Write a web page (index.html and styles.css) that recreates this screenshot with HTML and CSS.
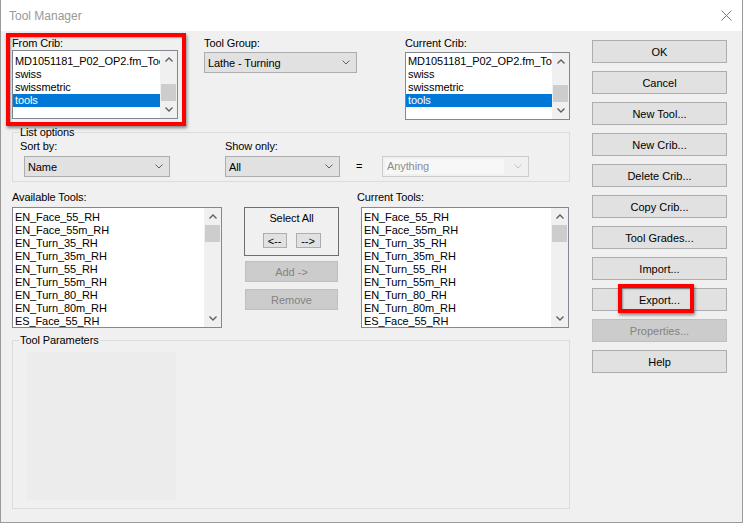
FILE: index.html
```html
<!DOCTYPE html>
<html lang="en">
<head>
    <meta charset="UTF-8">
    <meta name="viewport" content="width=device-width, initial-scale=1.0">
    <title>Tool Manager</title>
    <link rel="stylesheet" href="styles.css">
</head>
<body>
<div class="window">
    <div class="titlebar">
        <span class="title">Tool Manager</span>
        <svg class="close" width="11" height="11" viewBox="0 0 11 11"><path d="M0.5 0.5L10.5 10.5M10.5 0.5L0.5 10.5" stroke="#7a7a7a" stroke-width="1" fill="none"/></svg>
    </div>

    <div class="content">
        <div class="main">
            <!-- cribs -->
            <div class="crib-row">
                <div class="from-crib">
                    <div class="label">From Crib:</div>
                    <div class="listbox crib-list">
                        <div class="items">
                            <div class="item">MD1051181_P02_OP2.fm_Tools</div>
                            <div class="item">swiss</div>
                            <div class="item">swissmetric</div>
                            <div class="item selected">tools</div>
                        </div>
                        <div class="scrollbar at-end">
                            <span class="arrow"><svg width="8" height="5" viewBox="0 0 8 5"><path d="M0.5 4.5L4 1L7.5 4.5" stroke="#606060" stroke-width="1.4" fill="none"/></svg></span>
                            <span class="track"><span class="thumb"></span></span>
                            <span class="arrow"><svg width="8" height="5" viewBox="0 0 8 5"><path d="M0.5 0.5L4 4L7.5 0.5" stroke="#606060" stroke-width="1.4" fill="none"/></svg></span>
                        </div>
                    </div>
                </div>
                <div>
                    <div class="label">Tool Group:</div>
                    <div class="combo group-combo">
                        <span>Lathe - Turning</span>
                        <svg width="8" height="5" viewBox="0 0 8 5"><path d="M0.5 0.5L4 4L7.5 0.5" stroke="#606060" stroke-width="1" fill="none"/></svg>
                    </div>
                </div>
                <div>
                    <div class="label">Current Crib:</div>
                    <div class="listbox crib-list current">
                        <div class="items">
                            <div class="item">MD1051181_P02_OP2.fm_Tools</div>
                            <div class="item">swiss</div>
                            <div class="item">swissmetric</div>
                            <div class="item selected">tools</div>
                        </div>
                        <div class="scrollbar at-end">
                            <span class="arrow"><svg width="8" height="5" viewBox="0 0 8 5"><path d="M0.5 4.5L4 1L7.5 4.5" stroke="#606060" stroke-width="1.4" fill="none"/></svg></span>
                            <span class="track"><span class="thumb"></span></span>
                            <span class="arrow"><svg width="8" height="5" viewBox="0 0 8 5"><path d="M0.5 0.5L4 4L7.5 0.5" stroke="#606060" stroke-width="1.4" fill="none"/></svg></span>
                        </div>
                    </div>
                </div>
            </div>

            <!-- list options -->
            <fieldset class="group list-options">
                <legend>List options</legend>
                <div class="options">
                    <div class="opt-sort">
                        <div class="label">Sort by:</div>
                        <div class="combo">
                            <span>Name</span>
                            <svg width="8" height="5" viewBox="0 0 8 5"><path d="M0.5 0.5L4 4L7.5 0.5" stroke="#606060" stroke-width="1" fill="none"/></svg>
                        </div>
                    </div>
                    <div class="opt-show">
                        <div class="label">Show only:</div>
                        <div class="combo">
                            <span>All</span>
                            <svg width="8" height="5" viewBox="0 0 8 5"><path d="M0.5 0.5L4 4L7.5 0.5" stroke="#606060" stroke-width="1" fill="none"/></svg>
                        </div>
                    </div>
                    <span class="eq">=</span>
                    <div class="combo disabled">
                        <span class="edit">Anything</span>
                        <svg width="8" height="5" viewBox="0 0 8 5"><path d="M0.5 0.5L4 4L7.5 0.5" stroke="#c4c4c4" stroke-width="1" fill="none"/></svg>
                    </div>
                </div>
            </fieldset>

            <!-- tools -->
            <div class="tools-row">
                <div>
                    <div class="label">Available Tools:</div>
                    <div class="listbox tool-list">
                        <div class="items">
                            <div class="item">EN_Face_55_RH</div>
                            <div class="item">EN_Face_55m_RH</div>
                            <div class="item">EN_Turn_35_RH</div>
                            <div class="item">EN_Turn_35m_RH</div>
                            <div class="item">EN_Turn_55_RH</div>
                            <div class="item">EN_Turn_55m_RH</div>
                            <div class="item">EN_Turn_80_RH</div>
                            <div class="item">EN_Turn_80m_RH</div>
                            <div class="item">ES_Face_55_RH</div>
                        </div>
                        <div class="scrollbar">
                            <span class="arrow"><svg width="8" height="5" viewBox="0 0 8 5"><path d="M0.5 4.5L4 1L7.5 4.5" stroke="#606060" stroke-width="1.4" fill="none"/></svg></span>
                            <span class="track"><span class="thumb"></span></span>
                            <span class="arrow"><svg width="8" height="5" viewBox="0 0 8 5"><path d="M0.5 0.5L4 4L7.5 0.5" stroke="#606060" stroke-width="1.4" fill="none"/></svg></span>
                        </div>
                    </div>
                </div>
                <div class="mover">
                    <div class="select-box">
                        <div class="select-label">Select All</div>
                        <div class="arrows">
                            <button class="small-btn left">&lt;--</button>
                            <button class="small-btn right">--&gt;</button>
                        </div>
                    </div>
                    <button class="btn move-btn" disabled>Add -&gt;</button>
                    <button class="btn move-btn" disabled>Remove</button>
                </div>
                <div>
                    <div class="label">Current Tools:</div>
                    <div class="listbox tool-list current">
                        <div class="items">
                            <div class="item">EN_Face_55_RH</div>
                            <div class="item">EN_Face_55m_RH</div>
                            <div class="item">EN_Turn_35_RH</div>
                            <div class="item">EN_Turn_35m_RH</div>
                            <div class="item">EN_Turn_55_RH</div>
                            <div class="item">EN_Turn_55m_RH</div>
                            <div class="item">EN_Turn_80_RH</div>
                            <div class="item">EN_Turn_80m_RH</div>
                            <div class="item">ES_Face_55_RH</div>
                        </div>
                        <div class="scrollbar">
                            <span class="arrow"><svg width="8" height="5" viewBox="0 0 8 5"><path d="M0.5 4.5L4 1L7.5 4.5" stroke="#606060" stroke-width="1.4" fill="none"/></svg></span>
                            <span class="track"><span class="thumb"></span></span>
                            <span class="arrow"><svg width="8" height="5" viewBox="0 0 8 5"><path d="M0.5 0.5L4 4L7.5 0.5" stroke="#606060" stroke-width="1.4" fill="none"/></svg></span>
                        </div>
                    </div>
                </div>
            </div>

            <!-- parameters -->
            <fieldset class="group params">
                <legend>Tool Parameters</legend>
                <div class="preview"></div>
            </fieldset>
        </div>

        <div class="side">
            <button class="btn">OK</button>
            <button class="btn">Cancel</button>
            <button class="btn">New Tool...</button>
            <button class="btn">New Crib...</button>
            <button class="btn">Delete Crib...</button>
            <button class="btn">Copy Crib...</button>
            <button class="btn">Tool Grades...</button>
            <button class="btn">Import...</button>
            <button class="btn marked">Export...</button>
            <button class="btn" disabled>Properties...</button>
            <button class="btn">Help</button>
        </div>
    </div>
</div>
</body>
</html>
```

FILE: styles.css
```css
body { margin: 0; font: 11px "Liberation Sans", Arial, sans-serif; letter-spacing: -0.1px; color: #000; background: #f0f0f0; }

.window {
    width: 743px;
    height: 523px;
    box-sizing: border-box;
    border: 1px solid #9a9a9a;
    border-top: 0;
    background: #f0f0f0;
    overflow: hidden;
}

.titlebar {
    height: 31px;
    background: #fff;
    display: flex;
    align-items: center;
    justify-content: space-between;
    padding: 0 10px 0 8px;
}
.title { font-size: 12px; color: #999; letter-spacing: 0; }

.content { display: flex; padding-left: 11px; }
.main { width: 558px; }

.label { height: 13px; line-height: 13px; white-space: nowrap; }

/* crib row */
.crib-row {
    display: grid;
    grid-template-columns: 192px 201px 165px;
    margin-top: 6px;
}
.from-crib { position: relative; width: 166px; }
.from-crib::after {
    content: "";
    position: absolute;
    left: -6px;
    top: -4px;
    width: 180px;
    height: 93px;
    box-sizing: border-box;
    border: 4px solid #ff0000;
    box-shadow: 1px 2px 3px rgba(0, 0, 0, 0.45), inset 1px 1px 2px rgba(0, 0, 0, 0.35);
}

/* listboxes */
.listbox {
    display: flex;
    box-sizing: border-box;
    border: 1px solid #828790;
    background: #fff;
    overflow: hidden;
}
.items { flex: 1; min-width: 0; overflow: hidden; padding-top: 3px; }
.item {
    height: 13px;
    line-height: 13px;
    padding-left: 2px;
    white-space: nowrap;
    overflow: hidden;
}
.item.selected { background: #0078d7; color: #fff; }

.scrollbar {
    width: 17px;
    flex: none;
    background: #f0f0f0;
    display: flex;
    flex-direction: column;
}
.arrow { height: 17px; display: flex; align-items: center; justify-content: center; flex: none; }
.track { flex: 1; display: flex; flex-direction: column; }
.scrollbar.at-end .track { justify-content: flex-end; }
.thumb { height: 17px; margin: 0 1px; background: #cdcdcd; }

.crib-list { width: 166px; height: 69px; }
.crib-list .items { padding-top: 4px; }
.crib-list.current { width: 165px; height: 68px; margin-top: 2px; }
.crib-list.current .items { padding-top: 2px; }

/* combos */
.combo {
    height: 21px;
    box-sizing: border-box;
    border: 1px solid #adadad;
    background: #e1e1e1;
    display: flex;
    align-items: center;
    justify-content: space-between;
    padding: 0 6px 0 3px;
}
.group-combo { width: 153px; margin-top: 2px; }
.combo.disabled {
    width: 147px;
    border-color: #cccccc;
    background: #f0f0f0;
    color: #8d8d8d;
    padding: 0 6px 0 2px;
}
.combo.disabled .edit {
    align-self: stretch;
    flex: 1;
    margin: 2px 10px 2px 0;
    line-height: 15px;
    padding-left: 2px;
    background: #f7f7f7;
}

/* group boxes */
.group {
    margin: 6px 0 0;
    padding: 1px 0 4px 6px;
    border: 1px solid #dcdcdc;
    min-width: 0;
    width: 558px;
    box-sizing: border-box;
}
.group legend { padding: 0 1px; line-height: 13px; }

.options { display: flex; align-items: flex-end; padding-left: 1px; }
.options .label { margin-bottom: 3px; }
.opt-sort { width: 205px; }
.opt-sort .combo { margin-left: 4px; width: 146px; }
.opt-show { width: 131px; }
.opt-show .combo { width: 115px; }
.eq { width: 26px; line-height: 21px; }

/* tools row */
.tools-row {
    display: grid;
    grid-template-columns: 232px 113px 213px;
    margin-top: 9px;
}
.tool-list { height: 121px; width: 210px; margin-top: 3px; }
.tool-list.current { width: 208px; margin-left: 4px; }

.mover { margin-top: 16px; width: 95px; }
.select-box {
    height: 49px;
    box-sizing: border-box;
    border: 1px solid #6e6e6e;
    padding-top: 4px;
}
.select-label { text-align: center; line-height: 13px; }
.arrows { display: flex; justify-content: center; gap: 9px; margin-top: 8px; }
.small-btn {
    height: 15px;
    width: 24px;
    padding: 0;
    box-sizing: border-box;
    border: 1px solid #adadad;
    background: #e1e1e1;
    font: inherit;
    line-height: 12px;
    color: #000;
}
.small-btn.right { width: 25px; }

.btn {
    height: 23px;
    box-sizing: border-box;
    border: 1px solid #adadad;
    background: #e1e1e1;
    font: inherit;
    color: #000;
    padding: 0;
    display: flex;
    align-items: center;
    justify-content: center;
}
.btn:disabled { background: #cccccc; border-color: #bfbfbf; color: #838383; }
.move-btn { width: 93px; height: 21px; margin-left: 1px; margin-top: 5px; }
.move-btn + .move-btn { margin-top: 7px; }

.params { margin-top: 6px; padding: 5px 0 8px 6px; }
.preview { width: 149px; height: 148px; margin-left: 8px; background: #ececec; }

/* right column */
.side {
    margin-left: 22px;
    width: 135px;
    padding-top: 9px;
    display: flex;
    flex-direction: column;
    gap: 8px;
}
.btn.marked { position: relative; }
.btn.marked::after {
    content: "";
    position: absolute;
    left: 25px;
    top: -5px;
    width: 76px;
    height: 29px;
    box-sizing: border-box;
    border: 4px solid #ff0000;
    box-shadow: 1px 2px 3px rgba(0, 0, 0, 0.45), inset 1px 1px 2px rgba(0, 0, 0, 0.35);
}
```
